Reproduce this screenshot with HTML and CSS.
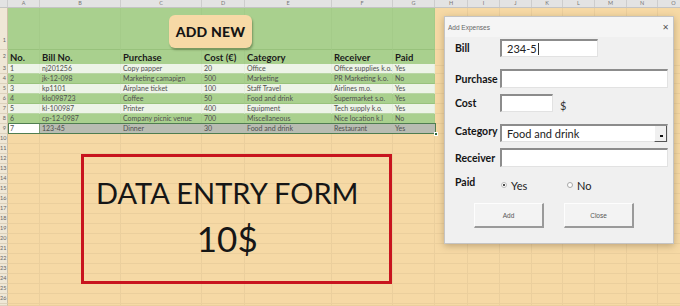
FILE: index.html
```html
<!DOCTYPE html>
<html>
<head>
<meta charset="utf-8">
<link rel="stylesheet" href="styles.css">
</head>
<body>
<div class="sheet">
  <div class="colhead"><b></b><span>A</span><span>B</span><span>C</span><span>D</span><span>E</span><span>F</span><span>G</span><span>H</span><span>I</span><span>J</span><span>K</span><span>L</span><span>M</span><span>N</span><span>O</span></div>
  <div class="row r1"><b>1</b><i></i><i></i><i></i><i></i><i></i><i></i><i></i><i></i><i></i><i></i><i></i><i></i><i></i><i></i><i></i></div>
  <div class="row hdr"><b>2</b><i>No.</i><i>Bill No.</i><i>Purchase</i><i>Cost (€)</i><i>Category</i><i>Receiver</i><i>Paid</i><i></i><i></i><i></i><i></i><i></i><i></i><i></i><i></i></div>
  <div class="row lt"><b>3</b><i>1</i><i>nj201256</i><i>Copy papper</i><i>20</i><i>Office</i><i>Office supplies k.o.</i><i>Yes</i><i></i><i></i><i></i><i></i><i></i><i></i><i></i><i></i></div>
  <div class="row dk"><b>4</b><i>2</i><i>jk-12-098</i><i>Marketing camapign</i><i>500</i><i>Marketing</i><i>PR Marketing k.o.</i><i>No</i><i></i><i></i><i></i><i></i><i></i><i></i><i></i><i></i></div>
  <div class="row lt"><b>5</b><i>3</i><i>kp1101</i><i>Airplane ticket</i><i>100</i><i>Staff Travel</i><i>Airlines m.o.</i><i>Yes</i><i></i><i></i><i></i><i></i><i></i><i></i><i></i><i></i></div>
  <div class="row dk"><b>6</b><i>4</i><i>klo098723</i><i>Coffee</i><i>50</i><i>Food and drink</i><i>Supermarket s.o.</i><i>Yes</i><i></i><i></i><i></i><i></i><i></i><i></i><i></i><i></i></div>
  <div class="row lt"><b>7</b><i>5</i><i>kl-100987</i><i>Printer</i><i>400</i><i>Equipment</i><i>Tech supply k.o.</i><i>Yes</i><i></i><i></i><i></i><i></i><i></i><i></i><i></i><i></i></div>
  <div class="row dk"><b>8</b><i>6</i><i>cp-12-0987</i><i>Company picnic venue</i><i>700</i><i>Miscellaneous</i><i>Nice location k.l</i><i>No</i><i></i><i></i><i></i><i></i><i></i><i></i><i></i><i></i></div>
  <div class="row sel"><b>9</b><i>7</i><i>123-45</i><i>Dinner</i><i>30</i><i>Food and drink</i><i>Restaurant</i><i>Yes</i><i></i><i></i><i></i><i></i><i></i><i></i><i></i><i></i></div>
  <div class="row"><b>10</b><i></i><i></i><i></i><i></i><i></i><i></i><i></i><i></i><i></i><i></i><i></i><i></i><i></i><i></i><i></i></div>
  <div class="row"><b>11</b><i></i><i></i><i></i><i></i><i></i><i></i><i></i><i></i><i></i><i></i><i></i><i></i><i></i><i></i><i></i></div>
  <div class="row"><b>12</b><i></i><i></i><i></i><i></i><i></i><i></i><i></i><i></i><i></i><i></i><i></i><i></i><i></i><i></i><i></i></div>
  <div class="row"><b>13</b><i></i><i></i><i></i><i></i><i></i><i></i><i></i><i></i><i></i><i></i><i></i><i></i><i></i><i></i><i></i></div>
  <div class="row"><b>14</b><i></i><i></i><i></i><i></i><i></i><i></i><i></i><i></i><i></i><i></i><i></i><i></i><i></i><i></i><i></i></div>
  <div class="row"><b>15</b><i></i><i></i><i></i><i></i><i></i><i></i><i></i><i></i><i></i><i></i><i></i><i></i><i></i><i></i><i></i></div>
  <div class="row"><b>16</b><i></i><i></i><i></i><i></i><i></i><i></i><i></i><i></i><i></i><i></i><i></i><i></i><i></i><i></i><i></i></div>
  <div class="row"><b>17</b><i></i><i></i><i></i><i></i><i></i><i></i><i></i><i></i><i></i><i></i><i></i><i></i><i></i><i></i><i></i></div>
  <div class="row"><b>18</b><i></i><i></i><i></i><i></i><i></i><i></i><i></i><i></i><i></i><i></i><i></i><i></i><i></i><i></i><i></i></div>
  <div class="row"><b>19</b><i></i><i></i><i></i><i></i><i></i><i></i><i></i><i></i><i></i><i></i><i></i><i></i><i></i><i></i><i></i></div>
  <div class="row"><b>20</b><i></i><i></i><i></i><i></i><i></i><i></i><i></i><i></i><i></i><i></i><i></i><i></i><i></i><i></i><i></i></div>
  <div class="row"><b>21</b><i></i><i></i><i></i><i></i><i></i><i></i><i></i><i></i><i></i><i></i><i></i><i></i><i></i><i></i><i></i></div>
  <div class="row"><b>22</b><i></i><i></i><i></i><i></i><i></i><i></i><i></i><i></i><i></i><i></i><i></i><i></i><i></i><i></i><i></i></div>
  <div class="row"><b>23</b><i></i><i></i><i></i><i></i><i></i><i></i><i></i><i></i><i></i><i></i><i></i><i></i><i></i><i></i><i></i></div>
  <div class="row"><b>24</b><i></i><i></i><i></i><i></i><i></i><i></i><i></i><i></i><i></i><i></i><i></i><i></i><i></i><i></i><i></i></div>
  <div class="row"><b>25</b><i></i><i></i><i></i><i></i><i></i><i></i><i></i><i></i><i></i><i></i><i></i><i></i><i></i><i></i><i></i></div>
  <div class="row"><b>26</b><i></i><i></i><i></i><i></i><i></i><i></i><i></i><i></i><i></i><i></i><i></i><i></i><i></i><i></i><i></i></div>
  <div class="row last"><b></b><i></i><i></i><i></i><i></i><i></i><i></i><i></i><i></i><i></i><i></i><i></i><i></i><i></i><i></i><i></i></div>
</div>

<div class="selection"><span class="handle"></span></div>

<div class="addnew">ADD NEW</div>

<div class="promo">
  <div class="promo-text">
    <p class="promo-title">DATA ENTRY FORM</p>
    <p class="promo-price">10$</p>
  </div>
</div>

<div class="dialog">
  <div class="titlebar"><span class="title">Add Expenses</span><span class="close-x">✕</span></div>
  <div class="form">
    <div class="field f-bill"><span class="label">Bill</span><div class="input w-short">234-5<span class="caret"></span></div></div>
    <div class="field f-purchase"><span class="label">Purchase</span><div class="input w-full"></div></div>
    <div class="field f-cost"><span class="label">Cost</span><div class="input w-cost"></div><span class="unit">$</span></div>
    <div class="field f-category"><span class="label">Category</span><div class="input combo w-full">Food and drink<span class="drop"></span></div></div>
    <div class="field f-receiver"><span class="label">Receiver</span><div class="input w-full"></div></div>
    <div class="field f-paid"><span class="label">Paid</span>
      <div class="radios">
        <span class="radio on"><span class="dot"></span>Yes</span>
        <span class="radio"><span class="dot"></span>No</span>
      </div>
    </div>
    <div class="buttons"><span class="btn">Add</span><span class="btn">Close</span></div>
  </div>
</div>
</body>
</html>
```

FILE: styles.css
```css
* { box-sizing: border-box; margin: 0; padding: 0; }
html, body { width: 680px; height: 306px; overflow: hidden; }
body {
  position: relative;
  background: #f6d9a5;
  font-family: Lato, "Liberation Sans", sans-serif;
}

.sheet { width: 690px; }

.colhead, .row {
  display: grid;
  grid-template-columns: 8px 32px 81px 81px 43px 87px 61px 42px 33px 32px 32px 31px 32px 32px 31px 32px;
}

.colhead { height: 8px; background: #e3e3e3; border-bottom: 1px solid #c4c4c4; }
.colhead > * {
  font-size: 5.5px;
  line-height: 7px;
  text-align: center;
  color: #777;
  border-right: 1px solid #cdcdcd;
  font-weight: normal;
}

.row { height: 10px; }
.row.last { height: 2px; }
.row > i {
  font-style: normal;
  font-size: 7px;
  line-height: 9px;
  padding-left: 2px;
  white-space: nowrap;
  color: #4f4f4f;
  border-right: 1px solid #ebcf9d;
  border-bottom: 1px solid #ebcf9d;
}
.row > b {
  font-weight: normal;
  font-size: 5.5px;
  line-height: 9px;
  color: #666;
  text-align: right;
  padding-right: 1px;
  overflow: hidden;
  white-space: nowrap;
  background: #efe7d6;
  border-right: 1px solid #cdbfa5;
  border-bottom: 1px solid #ddd2bd;
}

.r1 { height: 42px; }
.hdr { height: 14px; }
.hdr > i {
  font-weight: 700;
  font-size: 9.5px;
  line-height: 15px;
  color: #1b1b1b;
}
.hdr > b { line-height: 13px; }
.r1 > b { line-height: 64px; }

.r1 > i:nth-of-type(-n+7),
.hdr > i:nth-of-type(-n+7),
.dk > i:nth-of-type(-n+7) {
  background: #a9d08e;
  border-right-color: #a4cb89;
  border-bottom-color: #98c27c;
}
.lt > i:nth-of-type(-n+7) {
  background: #edf4e8;
  border-right-color: #e6efe0;
  border-bottom-color: #b9d6a4;
}
.sel > i:nth-of-type(-n+7) {
  background: #b8bcb2;
  border-right-color: #b8bcb2;
  border-bottom-color: #b8bcb2;
}
.sel > i:first-of-type { background: #ffffff; border-right-color: #7a9a70; }

.selection {
  position: absolute;
  left: 8px;
  top: 123px;
  width: 428px;
  height: 11px;
  border: 1px solid #4f7d50;
}
.handle {
  position: absolute;
  right: -3px;
  bottom: -3px;
  width: 4px;
  height: 4px;
  background: #2f6a3a;
  border: 1px solid #fff;
}

.addnew {
  position: absolute;
  left: 169px;
  top: 15px;
  width: 83px;
  height: 33px;
  border-radius: 6px;
  background: #f7d9a6;
  box-shadow: 1px 2px 2px rgba(60, 80, 40, 0.45);
  font-weight: 900;
  font-size: 14px;
  line-height: 33px;
  text-align: center;
  color: #141414;
  letter-spacing: 0.2px;
}

.promo {
  position: absolute;
  left: 81px;
  top: 154px;
  width: 311px;
  height: 130px;
  border: 3px solid #c8141e;
  padding: 21px 0 0 12px;
}
.promo-text {
  display: inline-flex;
  flex-direction: column;
  align-items: center;
  color: #161616;
}
.promo-title { font-size: 29px; line-height: 29px; font-weight: 400; }
.promo-price { font-size: 35px; line-height: 35px; margin-top: 14px; font-weight: 400; }

.dialog {
  position: absolute;
  left: 444px;
  top: 16px;
  width: 230px;
  height: 228px;
  background: #f0f0f0;
  border: 1px solid #c4c4c4;
  box-shadow: 0 2px 7px rgba(90, 70, 40, 0.35);
}
.titlebar {
  height: 20px;
  display: flex;
  align-items: center;
  justify-content: space-between;
  padding: 0 4px 0 3px;
  background: #f5f5f5;
}
.title { font-family: "Liberation Sans", sans-serif; font-size: 6.5px; color: #666; }
.close-x { font-family: "DejaVu Sans", sans-serif; font-size: 8px; color: #555; }

.form { display: flex; flex-direction: column; padding: 0 5px 0 10px; }
.field { display: flex; align-items: center; }
.label {
  width: 45px;
  flex: none;
  font-weight: 700;
  font-size: 10.5px;
  color: #151515;
}
.input {
  background: #fff;
  border-top: 2px solid #8c8c8c;
  border-left: 2px solid #8c8c8c;
  border-right: 1px solid #e2e2e2;
  border-bottom: 1px solid #e2e2e2;
  font-size: 11px;
  color: #222;
  padding-left: 5px;
  display: flex;
  align-items: center;
  position: relative;
}
.w-short { width: 98px; }
.w-full { width: 168px; }
.w-cost { width: 53px; }

.f-bill { margin-top: 2px; }
.f-bill .input { height: 18px; padding-left: 5px; }
.f-purchase { margin-top: 12px; }
.f-purchase .input { height: 19px; }
.f-cost { margin-top: 6px; }
.f-cost .input { height: 18px; }
.f-category { margin-top: 12px; }
.f-category .input { height: 18px; }
.f-category .label { margin-top: -5px; }
.f-receiver { margin-top: 6px; }
.f-receiver .input { height: 19px; }
.f-paid { margin-top: 11px; height: 14px; }
.f-paid .label { margin-top: -6px; }

.caret { width: 1px; height: 12px; background: #333; margin-left: 1px; }
.unit { font-size: 11px; color: #333; margin-left: 7px; margin-top: 4px; }

.drop {
  position: absolute;
  right: 0;
  top: 0;
  width: 13px;
  height: 16px;
  background: #f0f0f0;
  border-right: 1px solid #555;
  border-bottom: 1px solid #555;
  border-left: 1px solid #fff;
}
.drop::after {
  content: "";
  position: absolute;
  left: 5px;
  top: 9px;
  width: 3px;
  height: 2px;
  background: #111;
}

.radios { display: flex; }
.radio {
  display: flex;
  align-items: center;
  font-size: 11px;
  color: #222;
  width: 66px;
}
.radio .dot {
  width: 6px;
  height: 6px;
  border-radius: 50%;
  border: 1px solid #a8a8a8;
  background: #fff;
  margin-right: 4px;
  margin-left: 1px;
  position: relative;
}
.radio.on .dot { border-color: #bbb; }
.radio.on .dot::after {
  content: "";
  position: absolute;
  left: 1px;
  top: 1px;
  width: 2px;
  height: 2px;
  border-radius: 50%;
  background: #111;
}

.buttons { display: flex; gap: 20px; margin-top: 11px; padding-left: 19px; }
.btn {
  width: 70px;
  height: 25px;
  display: flex;
  align-items: center;
  justify-content: center;
  background: #f3f3f3;
  border-top: 1px solid #fdfdfd;
  border-left: 1px solid #fdfdfd;
  border-right: 2px solid #9a9a9a;
  border-bottom: 2px solid #9a9a9a;
  font-family: "Liberation Sans", sans-serif;
  font-size: 6.5px;
  color: #555;
}
```
